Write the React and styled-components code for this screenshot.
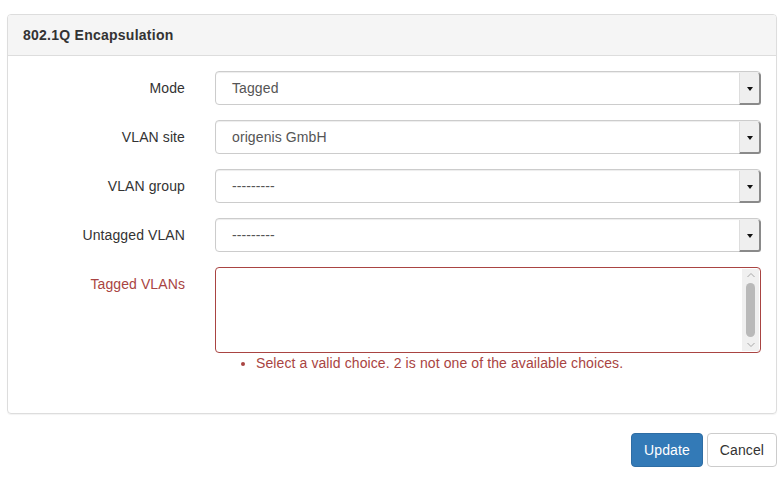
import React from 'react';
import styled, {createGlobalStyle} from "styled-components";

const Global = createGlobalStyle`
  html, body {
    margin: 0;
    background: #fff;
    font-family: "Liberation Sans", Arial, sans-serif;
    font-size: 14px;
    line-height: 1.42857;
    letter-spacing: 0.1px;
    color: #333;
  }
  * { box-sizing: border-box; }
`

const Page = styled.div`
  padding: 14px 7px 0 7px;
`

const Panel = styled.div`
  border: 1px solid #ddd;
  border-radius: 4px;
  margin-bottom: 19px;
  box-shadow: 0 1px 1px rgba(0, 0, 0, .05);
`

const Heading = styled.div`
  background: #f5f5f5;
  border-bottom: 1px solid #ddd;
  border-radius: 3px 3px 0 0;
  padding: 11px 15px 9px 15px;
  font-weight: bold;
  letter-spacing: 0.25px;
  color: #333;
`

const Body = styled.div`
  padding: 15px 0 24px 0;
`

const Row = styled.div`
  display: grid;
  grid-template-columns: 192px 1fr;
  margin-bottom: 15px;
`

const Label = styled.label`
  text-align: right;
  padding: 8px 15px 0 15px;
  color: ${p => p.error ? '#a94442' : '#333'};
`

const Field = styled.div`
  padding: 0 15px;
`

const SelectBox = styled.div`
  position: relative;
  height: 34px;
  border: 1px solid #ccc;
  border-radius: 4px;
  box-shadow: inset 0 1px 1px rgba(0, 0, 0, .075);
  padding: 7px 16px 5px 16px;
  color: #555;
  background: #fff;
`

const Arrow = styled.span`
  position: absolute;
  top: 1px;
  right: -1px;
  bottom: -1px;
  width: 22px;
  background: #efefef;
  border-left: 1px solid #ddd;
  border-right: 2px solid #8a8a8a;
  border-bottom: 2px solid #8a8a8a;
  border-radius: 0 3px 3px 0;

  &::after {
    content: "";
    position: absolute;
    left: 7px;
    top: 14px;
    border-left: 3px solid transparent;
    border-right: 3px solid transparent;
    border-top: 4px solid #111;
  }
`

const MultiBox = styled.div`
  position: relative;
  height: 86px;
  border: 1px solid #a94442;
  border-radius: 4px;
  background: #fff;
`

const Scroll = styled.div`
  position: absolute;
  top: 1px;
  right: 1px;
  bottom: 1px;
  width: 17px;
  background: #f0f0f0;
  display: flex;
  flex-direction: column;
  align-items: center;
`

const Thumb = styled.div`
  width: 9px;
  flex: 1;
  margin: 2px 0;
  background: #b9b9b9;
  border-radius: 5px;
`

const Chevron = styled.svg`
  width: 10px;
  height: 12px;
  flex: none;
`

const Errors = styled.ul`
  margin: 1px 0 0 0;
  padding-left: 41px;
  color: #a94442;
  list-style: disc;
`

const Actions = styled.div`
  display: flex;
  justify-content: flex-end;
  gap: 4px;
`

const Button = styled.button`
  font-family: inherit;
  font-size: 14px;
  line-height: 1.42857;
  letter-spacing: 0.1px;
  padding: 7px 12px 5px 12px;
  border-radius: 4px;
  border: 1px solid ${p => p.primary ? '#2e6da4' : '#ccc'};
  background: ${p => p.primary ? '#337ab7' : '#fff'};
  color: ${p => p.primary ? '#fff' : '#333'};
  height: 34px;
`

const Select = ({value}) => (
    <SelectBox>
        {value}
        <Arrow/>
    </SelectBox>
);

const App = () => {
    const selects = [
        ['Mode', 'Tagged'],
        ['VLAN site', 'origenis GmbH'],
        ['VLAN group', '---------'],
        ['Untagged VLAN', '---------'],
    ];
    return (
        <Page>
            <Global/>
            <Panel>
                <Heading>802.1Q Encapsulation</Heading>
                <Body>
                    {selects.map(([label, value]) => (
                        <Row key={label}>
                            <Label>{label}</Label>
                            <Field><Select value={value}/></Field>
                        </Row>
                    ))}
                    <Row>
                        <Label error>Tagged VLANs</Label>
                        <Field>
                            <MultiBox>
                                <Scroll>
                                    <Chevron viewBox="0 0 10 12">
                                        <path d="M1.5 8 L5 4.5 L8.5 8" fill="none" stroke="#a8a8a8" strokeWidth="1"/>
                                    </Chevron>
                                    <Thumb/>
                                    <Chevron viewBox="0 0 10 12">
                                        <path d="M1.5 4 L5 7.5 L8.5 4" fill="none" stroke="#a8a8a8" strokeWidth="1"/>
                                    </Chevron>
                                </Scroll>
                            </MultiBox>
                            <Errors>
                                <li>Select a valid choice. 2 is not one of the available choices.</li>
                            </Errors>
                        </Field>
                    </Row>
                </Body>
            </Panel>
            <Actions>
                <Button primary>Update</Button>
                <Button>Cancel</Button>
            </Actions>
        </Page>
    );
};

export default App;
